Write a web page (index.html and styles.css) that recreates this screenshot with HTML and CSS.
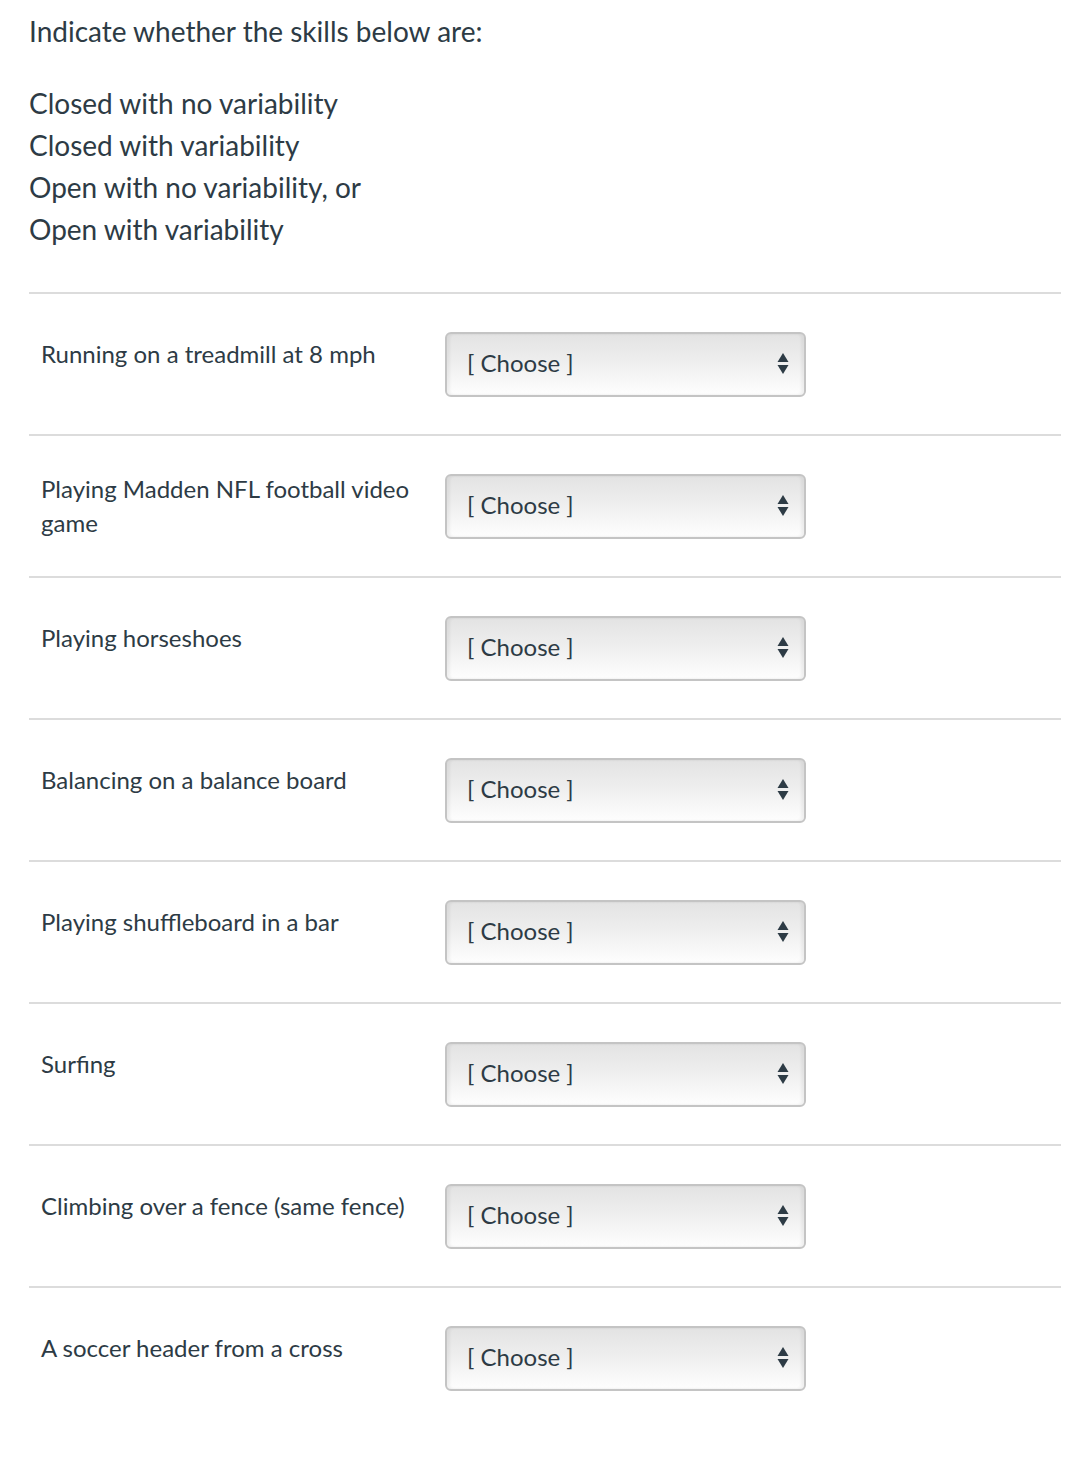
FILE: index.html
```html
<!DOCTYPE html>
<html lang="en">
<head>
<meta charset="utf-8">
<title>Matching question</title>
<link rel="stylesheet" href="styles.css">
</head>
<body>
<div class="page">
  <div class="intro">
    <p class="lead">Indicate whether the skills below are:</p>
    <p class="options">Closed with no variability<br>Closed with variability<br>Open with no variability, or<br>Open with variability</p>
  </div>

  <div class="answers">
    <div class="row">
      <div class="label">Running on a treadmill at 8 mph</div>
      <div class="select"><span class="value">[ Choose ]</span><svg class="arrows" width="12" height="22" viewBox="0 0 12 22"><path d="M6 0 L11.5 9 L0.5 9 Z"/><path d="M0.5 12 L11.5 12 L6 21 Z"/></svg></div>
    </div>
    <div class="row">
      <div class="label">Playing Madden NFL football video game</div>
      <div class="select"><span class="value">[ Choose ]</span><svg class="arrows" width="12" height="22" viewBox="0 0 12 22"><path d="M6 0 L11.5 9 L0.5 9 Z"/><path d="M0.5 12 L11.5 12 L6 21 Z"/></svg></div>
    </div>
    <div class="row">
      <div class="label">Playing horseshoes</div>
      <div class="select"><span class="value">[ Choose ]</span><svg class="arrows" width="12" height="22" viewBox="0 0 12 22"><path d="M6 0 L11.5 9 L0.5 9 Z"/><path d="M0.5 12 L11.5 12 L6 21 Z"/></svg></div>
    </div>
    <div class="row">
      <div class="label">Balancing on a balance board</div>
      <div class="select"><span class="value">[ Choose ]</span><svg class="arrows" width="12" height="22" viewBox="0 0 12 22"><path d="M6 0 L11.5 9 L0.5 9 Z"/><path d="M0.5 12 L11.5 12 L6 21 Z"/></svg></div>
    </div>
    <div class="row">
      <div class="label">Playing shuffleboard in a bar</div>
      <div class="select"><span class="value">[ Choose ]</span><svg class="arrows" width="12" height="22" viewBox="0 0 12 22"><path d="M6 0 L11.5 9 L0.5 9 Z"/><path d="M0.5 12 L11.5 12 L6 21 Z"/></svg></div>
    </div>
    <div class="row">
      <div class="label">Surfing</div>
      <div class="select"><span class="value">[ Choose ]</span><svg class="arrows" width="12" height="22" viewBox="0 0 12 22"><path d="M6 0 L11.5 9 L0.5 9 Z"/><path d="M0.5 12 L11.5 12 L6 21 Z"/></svg></div>
    </div>
    <div class="row">
      <div class="label">Climbing over a fence (same fence)</div>
      <div class="select"><span class="value">[ Choose ]</span><svg class="arrows" width="12" height="22" viewBox="0 0 12 22"><path d="M6 0 L11.5 9 L0.5 9 Z"/><path d="M0.5 12 L11.5 12 L6 21 Z"/></svg></div>
    </div>
    <div class="row">
      <div class="label">A soccer header from a cross</div>
      <div class="select"><span class="value">[ Choose ]</span><svg class="arrows" width="12" height="22" viewBox="0 0 12 22"><path d="M6 0 L11.5 9 L0.5 9 Z"/><path d="M0.5 12 L11.5 12 L6 21 Z"/></svg></div>
    </div>
  </div>
</div>
</body>
</html>
```

FILE: styles.css
```css
html, body {
  margin: 0;
  padding: 0;
  background: #ffffff;
}

body {
  font-family: Lato, "Open Sans", "Liberation Sans", sans-serif;
  color: #2d3b45;
}

.page {
  padding: 10px 9px 40px 29px;
}

.intro p {
  margin: 0;
  font-size: 28px;
  line-height: 42px;
}

.intro .lead {
  margin-bottom: 30px;
}

.answers {
  margin-top: 42px;
}

.row {
  display: flex;
  align-items: center;
  height: 140px;
  border-top: 2px solid #dcdcdc;
}

.label {
  box-sizing: border-box;
  flex: 0 0 416px;
  min-height: 54px;
  padding: 0 20px 0 12px;
  font-size: 24px;
  line-height: 34px;
}

.select {
  box-sizing: border-box;
  width: 361px;
  height: 65px;
  display: flex;
  align-items: center;
  justify-content: space-between;
  padding: 0 15px 0 20px;
  border: 2px solid #c4c4c4;
  border-radius: 6px;
  background: linear-gradient(to bottom, #e3e3e3 0%, #eeeeee 45%, #fefefe 100%);
  box-shadow: inset 3px 0 3px rgba(0, 0, 0, 0.05), inset -3px 0 3px rgba(0, 0, 0, 0.05);
  font-size: 24px;
}

.select .value {
  line-height: 1;
  margin-top: -3px;
}

.arrows {
  fill: #2d3b45;
}
```
